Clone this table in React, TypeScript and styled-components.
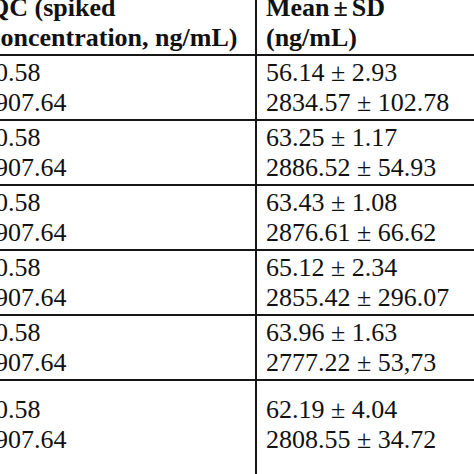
import React from 'react';
import styled, { createGlobalStyle } from 'styled-components';

type Row = {
  spiked: string[];
  measured: string[];
  extraTop?: boolean;
};

const rows: Row[] = [
  { spiked: ['0.58', '907.64'], measured: ['56.14 ± 2.93', '2834.57 ± 102.78'] },
  { spiked: ['0.58', '907.64'], measured: ['63.25 ± 1.17', '2886.52 ± 54.93'] },
  { spiked: ['0.58', '907.64'], measured: ['63.43 ± 1.08', '2876.61 ± 66.62'] },
  { spiked: ['0.58', '907.64'], measured: ['65.12 ± 2.34', '2855.42 ± 296.07'] },
  { spiked: ['0.58', '907.64'], measured: ['63.96 ± 1.63', '2777.22 ± 53,73'] },
  { spiked: ['0.58', '907.64'], measured: ['62.19 ± 4.04', '2808.55 ± 34.72'], extraTop: true },
];

const GlobalStyle = createGlobalStyle`
  html, body {
    margin: 0;
    padding: 0;
    background: #ffffff;
    overflow: hidden;
  }
  body {
    width: 474px;
    height: 474px;
    font-family: "Liberation Serif", "Times New Roman", serif;
    color: #111111;
  }
`;

const Page = styled.div`
  width: 474px;
  height: 474px;
  overflow: hidden;
`;

const Table = styled.div`
  display: flex;
  flex-direction: column;
  margin-top: -7px;
  margin-left: -20px;
  width: 520px;
`;

const TableRow = styled.div<{ $header?: boolean; $tall?: boolean }>`
  display: grid;
  grid-template-columns: 277px 1fr;
  border-top: ${(p) => (p.$header ? 'none' : '2px solid #161616')};
  min-height: ${(p) => (p.$tall ? '120px' : 'auto')};
`;

const Cell = styled.div<{ $left?: boolean; $tall?: boolean; $header?: boolean }>`
  box-sizing: border-box;
  border-right: ${(p) => (p.$left ? '2px solid #161616' : 'none')};
  padding: ${(p) => (p.$tall ? '14px' : p.$header ? '0' : '2px')} 0 1px
    ${(p) => (p.$left ? '15px' : '9px')};
  font-size: 26px;
  line-height: 30px;
  font-weight: ${(p) => (p.$header ? 700 : 400)};
  white-space: nowrap;
`;

const Line = styled.div<{ $shift?: number }>`
  margin-left: ${(p) => p.$shift ?? 0}px;
`;

// the ± in the header sits a little apart from its neighbours
const PlusMinus = styled.span`
  margin: 0 4px;
`;

export default function App() {
  return (
    <Page>
      <GlobalStyle />
      <Table>
        <TableRow $header>
          <Cell $left $header>
            <Line $shift={-6}>QC (spiked</Line>
            <Line $shift={-6}>concentration, ng/mL)</Line>
          </Cell>
          <Cell $header>
            <Line>
              Mean<PlusMinus>±</PlusMinus>SD
            </Line>
            <Line>(ng/mL)</Line>
          </Cell>
        </TableRow>
        {rows.map((row, i) => (
          <TableRow key={i} $tall={row.extraTop}>
            <Cell $left $tall={row.extraTop}>
              {row.spiked.map((s) => (
                <Line key={s}>{s}</Line>
              ))}
            </Cell>
            <Cell $tall={row.extraTop}>
              {row.measured.map((m) => (
                <Line key={m}>{m}</Line>
              ))}
            </Cell>
          </TableRow>
        ))}
      </Table>
    </Page>
  );
}
